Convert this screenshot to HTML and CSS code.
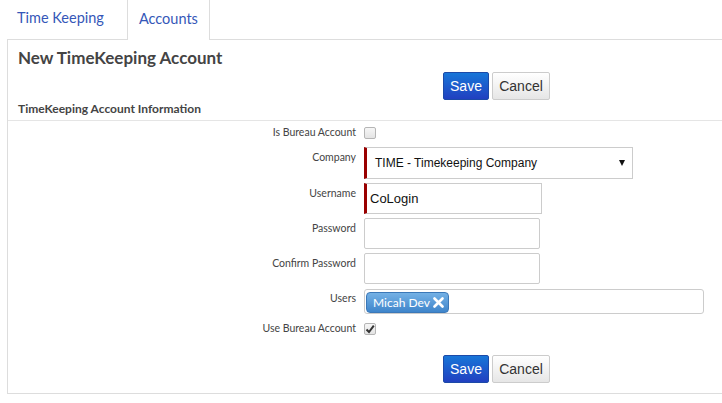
FILE: index.html
```html
<!DOCTYPE html>
<html>
<head>
<meta charset="utf-8">
<link rel="stylesheet" href="styles.css">
</head>
<body>
<div class="tabs">
  <div class="tab">Time Keeping</div>
  <div class="tab active">Accounts</div>
</div>
<div class="panel">
  <h1 class="title">New TimeKeeping Account</h1>
  <div class="actions top">
    <button class="btn btn-primary">Save</button>
    <button class="btn btn-default">Cancel</button>
  </div>
  <h2 class="section">TimeKeeping Account Information</h2>
  <div class="form">
    <div class="row row-check first">
      <label class="lbl">Is Bureau Account</label>
      <div class="field"><span class="check"></span></div>
    </div>
    <div class="row row-company">
      <label class="lbl">Company</label>
      <div class="field">
        <div class="select required"><span>TIME - Timekeeping Company</span><span class="arrow"></span></div>
      </div>
    </div>
    <div class="row row-input">
      <label class="lbl">Username</label>
      <div class="field"><input class="input required username" type="text" value="CoLogin"></div>
    </div>
    <div class="row row-input">
      <label class="lbl">Password</label>
      <div class="field"><input class="input pw" type="password"></div>
    </div>
    <div class="row row-input">
      <label class="lbl">Confirm Password</label>
      <div class="field"><input class="input pw" type="password"></div>
    </div>
    <div class="row row-users">
      <label class="lbl">Users</label>
      <div class="field">
        <div class="tagbox">
          <span class="tag">Micah Dev<svg class="x" width="11" height="11" viewBox="0 0 11 11"><path d="M1.5 1.5 L9.5 9.5 M9.5 1.5 L1.5 9.5" stroke="#fff" stroke-width="2.6" stroke-linecap="round"/></svg></span>
        </div>
      </div>
    </div>
    <div class="row row-check last">
      <label class="lbl">Use Bureau Account</label>
      <div class="field"><span class="check checked"><svg width="10" height="10" viewBox="0 0 10 10"><path d="M1.5 5.5 L4 8 L8.8 1.6" fill="none" stroke="#333" stroke-width="2"/></svg></span></div>
    </div>
  </div>
  <div class="actions bottom">
    <button class="btn btn-primary">Save</button>
    <button class="btn btn-default">Cancel</button>
  </div>
</div>
</body>
</html>
```
FILE: styles.css
```css
html, body {
  margin: 0;
  padding: 0;
  background: #fff;
  overflow: hidden;
}
body {
  font-family: Lato, "Liberation Sans", sans-serif;
  color: #444;
}
.tabs {
  display: flex;
  gap: 11px;
  padding-left: 5px;
  height: 39px;
  position: relative;
  z-index: 1;
}
.tab {
  padding: 0 12px 4px;
  height: 39px;
  box-sizing: border-box;
  display: flex;
  align-items: center;
  font-size: 14.5px;
  color: #3557b8;
}
.tab.active {
  border: 1px solid #ddd;
  border-top: none;
  border-bottom: none;
  background: #fff;
  height: 40px;
  padding: 0 11px 4px 11px;
  margin-bottom: -1px;
}
.panel {
  margin-left: 7px;
  border: 1px solid #ddd;
  border-right: none;
  padding-bottom: 10px;
}
.title {
  margin: 0;
  padding: 7px 0 0 10px;
  font-size: 17px;
  line-height: 22px;
  font-weight: 700;
  color: #444;
}
.actions {
  display: flex;
  gap: 3px;
  padding-left: 435px;
}
.actions.top {
  margin-top: 3px;
}
.actions.bottom {
  margin-top: 20px;
}
.btn {
  height: 28px;
  font-family: "Liberation Sans", Arial, sans-serif;
  font-size: 14px;
  padding: 0 6px;
  border-radius: 2px;
  cursor: pointer;
}
.btn-primary {
  width: 46px;
  color: #fff;
  border: 1px solid #1c4aa8;
  background: linear-gradient(#1876d8, #2140c0);
}
.btn-default {
  width: 58px;
  color: #333;
  border: 1px solid #ccc;
  background: linear-gradient(#fff, #e6e6e6);
}
.section {
  margin: 1px 0 0;
  padding: 0 0 4px 10px;
  font-size: 12px;
  line-height: 15px;
  font-weight: 700;
  color: #444;
  border-bottom: 1px solid #e5e5e5;
}
.form {
  display: flex;
  flex-direction: column;
}
.row {
  display: grid;
  grid-template-columns: 348px 1fr;
  column-gap: 8px;
  align-items: start;
}
.row.first { margin-top: 5px; }
.row-company { margin-top: 8px; }
.row-input { margin-top: 4px; }
.row-users { margin-top: 5px; }
.row.last { margin-top: 8px; }
.lbl {
  text-align: right;
  font-size: 10.5px;
  line-height: 13px;
  color: #444;
  padding-top: 4px;
}
.row-check .lbl { padding-top: 0; }
.row-users .lbl { padding-top: 3px; }
.field {
  display: flex;
}
.check {
  margin-top: 1px;
  width: 12px;
  height: 12px;
  box-sizing: border-box;
  border: 1px solid #b5b5b5;
  border-radius: 2px;
  background: linear-gradient(#f6f6f6, #e4e4e4);
  display: flex;
  align-items: center;
  justify-content: center;
}
.check svg { display: block; }
.select {
  width: 269px;
  height: 32px;
  box-sizing: border-box;
  border: 1px solid #ccc;
  display: flex;
  align-items: center;
  justify-content: space-between;
  padding: 0 7px 0 8px;
  font-family: "Liberation Sans", Arial, sans-serif;
  font-size: 12px;
  color: #111;
}
.required {
  border-left: 3px solid #900;
}
.arrow {
  width: 0;
  height: 0;
  border-left: 3px solid transparent;
  border-right: 3px solid transparent;
  border-top: 6px solid #111;
}
.input {
  margin: 0;
  height: 31px;
  box-sizing: border-box;
  border: 1px solid #ccc;
  border-radius: 2px;
  font-family: "Liberation Sans", Arial, sans-serif;
  font-size: 13px;
  color: #111;
  padding: 0 3px;
  outline: none;
}
.input.required {
  border-left: 3px solid #900;
  border-radius: 0;
}
.username { width: 178px; }
.pw { width: 176px; }
.tagbox {
  width: 340px;
  height: 25px;
  box-sizing: border-box;
  border: 1px solid #ccc;
  border-radius: 3px;
  padding: 1px 0 0 1px;
}
.tag {
  display: inline-flex;
  align-items: center;
  gap: 3px;
  height: 21px;
  box-sizing: border-box;
  padding: 0 4px 0 6px;
  border: 1px solid #3b78b8;
  border-radius: 4px;
  background: linear-gradient(#74b1e5, #3f85cb);
  color: #fff;
  font-size: 12px;
}
.x { display: block; }
```
